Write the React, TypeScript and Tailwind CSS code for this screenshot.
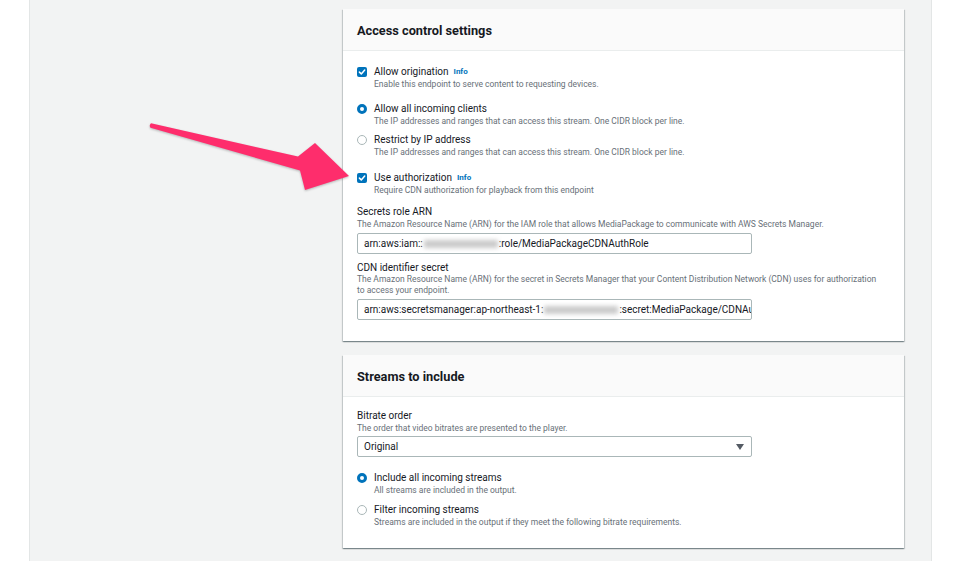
import React from "react";

function Check() {
  return (
    <span className="flex h-[10px] w-[10px] items-center justify-center rounded-[2px] bg-[#0073bb]">
      <svg viewBox="0 0 10 10" className="h-[10px] w-[10px]">
        <path d="M2.4 5.1 L4.3 6.9 L7.7 3.1" fill="none" stroke="white" strokeWidth="1.5" strokeLinecap="round" strokeLinejoin="round" />
      </svg>
    </span>
  );
}

function Radio({ on }: { on?: boolean }) {
  return on ? (
    <span className="block h-[10px] w-[10px] rounded-full border-[3px] border-[#0073bb] bg-white" />
  ) : (
    <span className="block h-[10px] w-[10px] rounded-full border border-[#aab7b8] bg-white" />
  );
}

function Option({
  control,
  label,
  desc,
  info,
}: {
  control: React.ReactNode;
  label: string;
  desc: string;
  info?: boolean;
}) {
  return (
    <div className="flex gap-[7px]">
      <div className="flex h-[12px] w-[10px] shrink-0 items-center">{control}</div>
      <div>
        <div className="flex items-center gap-[5px] text-[10px] leading-[12px] text-[#16191f]">
          <span>{label}</span>
          {info && <span className="text-[8px] font-bold text-[#0073bb]">Info</span>}
        </div>
        <div className="text-[8.5px] leading-[12px] text-[#687078]">{desc}</div>
      </div>
    </div>
  );
}

function Blur() {
  return <span className="mx-[1px] inline-block h-[8px] w-[74px] shrink-0 bg-[#cbcbcb] blur-[2px]" />;
}

const cardShadow =
  "shadow-[0_1px_1px_0_rgba(0,28,36,0.3),1px_1px_1px_0_rgba(0,28,36,0.15),-1px_1px_1px_0_rgba(0,28,36,0.15)]";

export default function App() {
  return (
    <div className="relative flex h-[561px] w-[960px] overflow-hidden bg-white font-[Roboto,'Liberation_Sans',sans-serif]">
      <div className="ml-[29px] flex h-full w-[903px] justify-end border-x border-[#e3e6e6] bg-[#f2f3f3] pr-[27px] pt-[9px]">
        <div className="flex w-[561px] flex-col gap-[14px]">
          {/* Card 1 */}
          <section className={`bg-white ${cardShadow}`}>
            <header className="flex h-[42px] items-center border-b border-[#eaeded] bg-[#fafafa] px-[14px] pt-[3px] text-[12.75px] font-bold text-[#16191f]">
              Access control settings
            </header>
            <div className="px-[14px] pb-[21px] pt-[15px]">
              <Option
                control={<Check />}
                label="Allow origination"
                info
                desc="Enable this endpoint to serve content to requesting devices."
              />
              <div className="mt-[13px] flex flex-col gap-[7px]">
                <Option
                  control={<Radio on />}
                  label="Allow all incoming clients"
                  desc="The IP addresses and ranges that can access this stream. One CIDR block per line."
                />
                <Option
                  control={<Radio />}
                  label="Restrict by IP address"
                  desc="The IP addresses and ranges that can access this stream. One CIDR block per line."
                />
              </div>
              <div className="mt-[14px]">
                <Option
                  control={<Check />}
                  label="Use authorization"
                  info
                  desc="Require CDN authorization for playback from this endpoint"
                />
              </div>
              <div className="mt-[10px]">
                <div className="text-[10px] leading-[12px] text-[#16191f]">Secrets role ARN</div>
                <div className="text-[8.5px] leading-[12px] text-[#687078]">
                  The Amazon Resource Name (ARN) for the IAM role that allows MediaPackage to communicate with AWS Secrets Manager.
                </div>
                <div className="mt-[3px] flex h-[21px] w-[395px] items-center overflow-hidden whitespace-nowrap rounded-[2px] border border-[#aab7b8] bg-white px-[6px] text-[10px] text-[#16191f]">
                  <span className="shrink-0">arn:aws:iam::</span>
                  <Blur />
                  <span className="shrink-0">:role/MediaPackageCDNAuthRole</span>
                </div>
              </div>
              <div className="mt-[8px]">
                <div className="text-[10px] leading-[12px] text-[#16191f]">CDN identifier secret</div>
                <div className="w-[522px] text-[8.5px] leading-[11px] text-[#687078]">
                  The Amazon Resource Name (ARN) for the secret in Secrets Manager that your Content Distribution Network (CDN) uses for authorization to access your endpoint.
                </div>
                <div className="mt-[3px] flex h-[21px] w-[395px] items-center overflow-hidden whitespace-nowrap rounded-[2px] border border-[#aab7b8] bg-white px-[6px] text-[10px] text-[#16191f]">
                  <span className="shrink-0">arn:aws:secretsmanager:ap-northeast-1:</span>
                  <Blur />
                  <span className="shrink-0">:secret:MediaPackage/CDNAuthSecret-a1b2c3</span>
                </div>
              </div>
            </div>
          </section>

          {/* Card 2 */}
          <section className={`bg-white ${cardShadow}`}>
            <header className="flex h-[42px] items-center border-b border-[#eaeded] bg-[#fafafa] px-[14px] pt-[3px] text-[12.75px] font-bold text-[#16191f]">
              Streams to include
            </header>
            <div className="px-[14px] pb-[20px] pt-[13px]">
              <div className="text-[10px] leading-[12px] text-[#16191f]">Bitrate order</div>
              <div className="text-[8.5px] leading-[12px] text-[#687078]">
                The order that video bitrates are presented to the player.
              </div>
              <div className="mt-[2px] flex h-[21px] w-[395px] items-center justify-between rounded-[2px] border border-[#aab7b8] bg-white pl-[6px] pr-[7px] text-[10px] text-[#16191f]">
                <span>Original</span>
                <svg width="8" height="6" viewBox="0 0 8 6">
                  <path d="M0 0 H8 L4 6 Z" fill="#545b64" />
                </svg>
              </div>
              <div className="mt-[15px] flex flex-col gap-[8px]">
                <Option
                  control={<Radio on />}
                  label="Include all incoming streams"
                  desc="All streams are included in the output."
                />
                <Option
                  control={<Radio />}
                  label="Filter incoming streams"
                  desc="Streams are included in the output if they meet the following bitrate requirements."
                />
              </div>
            </div>
          </section>
        </div>
      </div>

      {/* Annotation arrow */}
      <svg
        className="pointer-events-none absolute left-0 top-0 drop-shadow-[0_1px_1px_rgba(0,0,0,0.25)]"
        width="960"
        height="561"
        viewBox="0 0 960 561"
      >
        <path
          d="M151 123.3 L298 156.5 L315 143 L349 176 L305 190 L300 170.5 L150.5 127.7 Q148.8 125.4 151 123.3 Z"
          fill="#fe2d6c"
        />
      </svg>
    </div>
  );
}
